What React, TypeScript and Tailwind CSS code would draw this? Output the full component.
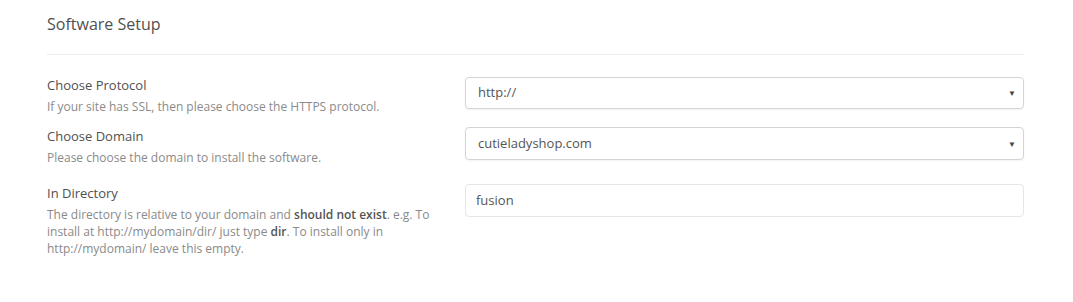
export default function App() {
  return (
    <div className="min-h-screen bg-white font-['Open_Sans',sans-serif] text-[#555]">
      <div className="ml-[47px] w-[977px] pt-[13px]">
        {/* header */}
        <h1 className="text-[16px] leading-[22px] text-[#505050]">Software Setup</h1>
        <div className="mt-[19px] h-px bg-[#ececec]" />

        {/* protocol */}
        <div className="mt-[21px] flex">
          <div className="w-[418px]">
            <div className="text-[13px] leading-[18px] text-[#505050]">Choose Protocol</div>
            <div className="mt-[4px] text-[12px] leading-[17px] text-[#8a8a8a]">
              If your site has SSL, then please choose the HTTPS protocol.
            </div>
          </div>
          <div className="flex-1">
            <div className="mt-px flex h-[32px] items-center justify-between rounded-[4px] border border-[#d4d4d4] pl-[12px] pr-[7px] shadow-[0_1px_2px_rgba(0,0,0,0.05)]">
              <span className="text-[13px] text-[#555]">http://</span>
              <span className="text-[8px] text-[#444]">▼</span>
            </div>
          </div>
        </div>

        {/* domain */}
        <div className="mt-[12px] flex">
          <div className="w-[418px]">
            <div className="text-[13px] leading-[18px] text-[#505050]">Choose Domain</div>
            <div className="mt-[4px] text-[12px] leading-[17px] text-[#8a8a8a]">
              Please choose the domain to install the software.
            </div>
          </div>
          <div className="flex-1">
            <div className="flex h-[33px] items-center justify-between rounded-[4px] border border-[#d4d4d4] pl-[12px] pr-[7px] shadow-[0_1px_2px_rgba(0,0,0,0.05)]">
              <span className="text-[13px] text-[#555]">cutieladyshop.com</span>
              <span className="text-[8px] text-[#444]">▼</span>
            </div>
          </div>
        </div>

        {/* directory */}
        <div className="mt-[18px] flex">
          <div className="w-[418px]">
            <div className="text-[13px] leading-[18px] text-[#505050]">In Directory</div>
            <div className="mt-[4px] w-[388px] text-[12px] leading-[17px] text-[#8a8a8a]">
              The directory is relative to your domain and{" "}
              <b className="font-semibold text-[#555]">should not exist</b>. e.g. To install at
              http://mydomain/dir/ just type <b className="font-semibold text-[#555]">dir</b>. To
              install only in http://mydomain/ leave this empty.
            </div>
          </div>
          <div className="flex-1">
            <div className="flex h-[33px] items-center rounded-[4px] border border-[#e6e6e6] pl-[10px]">
              <span className="text-[13px] text-[#555]">fusion</span>
            </div>
          </div>
        </div>
      </div>
    </div>
  );
}
